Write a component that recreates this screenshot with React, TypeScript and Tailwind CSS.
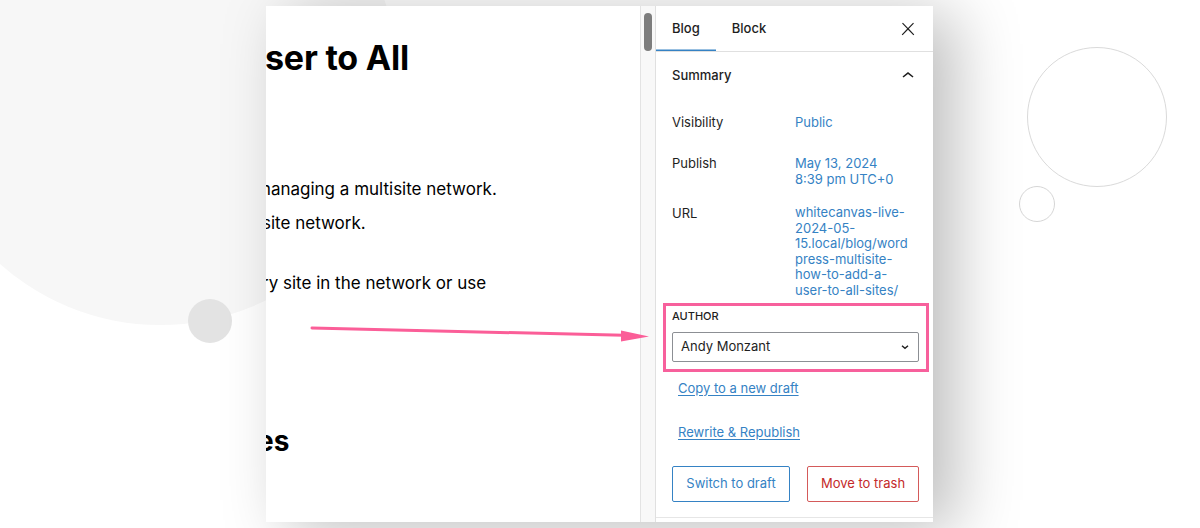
import React from "react";

const urlLines = [
  "whitecanvas-live-",
  "2024-05-",
  "15.local/blog/word",
  "press-multisite-",
  "how-to-add-a-",
  "user-to-all-sites/",
];

function CloseIcon() {
  return (
    <svg width="20" height="20" viewBox="0 0 24 24" fill="#1e1e1e">
      <path d="M13 11.8l6.1-6.3-1-1-6.1 6.2-6.1-6.2-1 1 6.1 6.3-6.5 6.7 1 1 6.5-6.6 6.5 6.6 1-1z" />
    </svg>
  );
}

function ChevronUp() {
  return (
    <svg width="24" height="24" viewBox="0 0 24 24" fill="#1e1e1e">
      <path d="M6.5 12.4L12 8l5.5 4.4-.9 1.2L12 10l-4.5 3.6-1-1.2z" />
    </svg>
  );
}

function ChevronDown() {
  return (
    <svg width="12" height="12" viewBox="0 0 12 12" fill="none">
      <path d="M3 4.8l3 2.6 3-2.6" stroke="#1e1e1e" strokeWidth="1.4" />
    </svg>
  );
}

function Editor() {
  return (
    <div className="w-[374px] h-full overflow-hidden bg-white text-black whitespace-nowrap flex flex-col">
      <div className="mt-[32px] h-[40px] leading-[40px] text-[34px] font-bold tracking-[-0.2px] -ml-[1px]">
        ser to All
      </div>
      <div className="mt-[95px] h-[32px] leading-[32px] text-[17px] -ml-[10px]">
        managing a multisite network.
      </div>
      <div className="mt-[2px] h-[32px] leading-[32px] text-[17px] -ml-[4px]">
        site network.
      </div>
      <div className="mt-[28px] h-[32px] leading-[32px] text-[17px] -ml-[4px]">
        ry site in the network or use
      </div>
      <div className="mt-[124px] h-[36px] leading-[36px] text-[28px] font-bold -ml-[9px]">
        es
      </div>
    </div>
  );
}

function Sidebar() {
  return (
    <div className="w-[278px] h-full border-l border-[#e0e0e0] bg-white flex flex-col text-[13px] text-[#1e1e1e]">
      <div className="h-[46px] border-b border-[#e0e0e0] flex items-stretch pr-[14px]">
        <div className="px-4 flex items-center font-medium shadow-[inset_0_-1.5px_0_#3582c4]">Blog</div>
        <div className="px-4 flex items-center font-medium">Block</div>
        <div className="ml-auto flex items-center pr-[1px]">
          <CloseIcon />
        </div>
      </div>
      <div className="pl-4 pr-[14px] flex flex-col">
        <div className="h-[48px] flex items-center justify-between font-medium">
          <span>Summary</span>
          <span className="-mr-[1px]">
            <ChevronUp />
          </span>
        </div>
        <div className="mt-[14px] flex leading-[16px]">
          <span className="w-[123px]">Visibility</span>
          <span className="text-[#3582c4]">Public</span>
        </div>
        <div className="mt-[25px] flex leading-[16px]">
          <span className="w-[123px]">Publish</span>
          <span className="text-[#3582c4]">
            May 13, 2024
            <br />
            8:39 pm UTC+0
          </span>
        </div>
        <div className="mt-[18px] flex leading-[15.6px]">
          <span className="w-[123px] leading-[16px]">URL</span>
          <span className="text-[#3582c4] flex flex-col">
            {urlLines.map((l) => (
              <span key={l}>{l}</span>
            ))}
          </span>
        </div>
        <div className="mt-[4px] -ml-[9px] -mr-[10px] border-[3px] border-[#f7609c] pt-[2px] pl-[6px] pr-[7px] pb-[7px]">
          <div className="text-[11px] font-medium uppercase leading-[16px]">Author</div>
          <div className="mt-[8px] h-[30px] border border-[#8c8f94] rounded-[2px] flex items-center justify-between pl-2 pr-[7px]">
            <span>Andy Monzant</span>
            <ChevronDown />
          </div>
        </div>
        <div className="mt-[8px] px-1.5 leading-[16px]">
          <span className="text-[#3582c4] underline underline-offset-[2px]">Copy to a new draft</span>
        </div>
        <div className="mt-[28px] px-1.5 leading-[16px]">
          <span className="text-[#3582c4] underline underline-offset-[2px]">Rewrite &amp; Republish</span>
        </div>
        <div className="mt-[26px] flex">
          <div className="w-[118px] h-[36px] border border-[#3582c4] rounded-[2px] text-[#3582c4] flex items-center justify-center">
            Switch to draft
          </div>
          <div className="ml-[17px] w-[112px] h-[36px] border border-[#d45a5a] rounded-[2px] text-[#c42a2a] flex items-center justify-center">
            Move to trash
          </div>
        </div>
      </div>
      <div className="mt-auto h-[5px] border-t border-[#e6e6e6]" />
    </div>
  );
}

export default function App() {
  return (
    <div className="relative w-[1200px] h-[528px] overflow-hidden bg-white font-[Inter,sans-serif] pt-[6px]">
      <div className="absolute left-[-80px] top-[-155px] w-[480px] h-[480px] rounded-full bg-[#f7f7f7]" />
      <div className="absolute left-[188px] top-[299px] w-[44px] h-[44px] rounded-full bg-[#e3e3e3]" />
      <div className="absolute left-[1027px] top-[47px] w-[140px] h-[140px] rounded-full border border-[#dadada]" />
      <div className="absolute left-[1019px] top-[186px] w-[36px] h-[36px] rounded-full border border-[#d6d6d6]" />

      <div className="relative ml-[266px] w-[667px] h-[516px] flex bg-white shadow-[22px_8px_60px_rgba(0,0,0,0.26)]">
        <Editor />
        <div className="w-[15px] h-full bg-[#f8f8f8] border-l border-[#e3e3e3]">
          <div className="mt-[7px] ml-[3px] w-[8px] h-[38px] rounded-full bg-[#7d7d7d]" />
        </div>
        <Sidebar />
      </div>

      <svg className="absolute left-0 top-0 pointer-events-none" width="1200" height="528" viewBox="0 0 1200 528">
        <path d="M312 328 L624 335.3" stroke="#fb5e98" strokeWidth="3" strokeLinecap="round" />
        <polygon points="621,330.5 649,336.5 621,341.5" fill="#fb5e98" />
      </svg>
    </div>
  );
}
